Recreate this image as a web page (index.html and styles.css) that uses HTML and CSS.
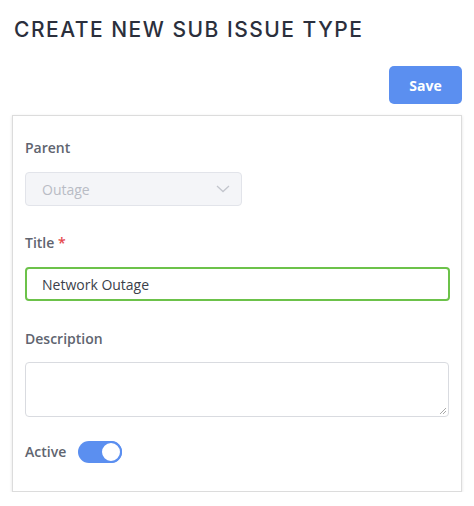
FILE: index.html
```html
<!DOCTYPE html>
<html>
<head>
<meta charset="utf-8">
<link rel="stylesheet" href="styles.css">
</head>
<body>
<div class="page">
  <h1 class="title">CREATE NEW SUB ISSUE TYPE</h1>
  <div class="actions">
    <button class="btn-save">Save</button>
  </div>
  <div class="card">
    <div class="field">
      <label class="label">Parent</label>
      <div class="select">
        <span class="select-value">Outage</span>
        <svg class="chev" width="14" height="8" viewBox="0 0 14 8"><path d="M1 1 L7 6.5 L13 1" fill="none" stroke="#c3c6cd" stroke-width="1.3"/></svg>
      </div>
    </div>
    <div class="field">
      <label class="label">Title <span class="req">*</span></label>
      <div class="input input-valid">Network Outage</div>
    </div>
    <div class="field field-desc">
      <label class="label">Description</label>
      <div class="textarea">
        <svg class="grip" width="8" height="8" viewBox="0 0 8 8"><path d="M7 1 L1 7 M7 4 L4 7" stroke="#a8a8a8" stroke-width="1"/></svg>
      </div>
    </div>
    <div class="active-row">
      <span class="label inline">Active</span>
      <span class="toggle"><span class="knob"></span></span>
    </div>
  </div>
</div>
</body>
</html>
```

FILE: styles.css
```css
* { box-sizing: border-box; }
body {
  margin: 0;
  background: #ffffff;
  font-family: "Open Sans", "Liberation Sans", sans-serif;
}
.page {
  padding: 17px 12px 0 12px;
  width: 474px;
}
.title {
  margin: 0 0 0 2px;
  font-family: "Inter", "Liberation Sans", sans-serif;
  font-weight: 500;
  font-size: 21px;
  line-height: 26px;
  letter-spacing: 1.5px;
  color: #2b2f3c;
}
.actions {
  display: flex;
  justify-content: flex-end;
  margin-top: 23px;
}
.btn-save {
  width: 73px;
  height: 38px;
  border: none;
  border-radius: 5px;
  background: #5b8ff0;
  color: #ffffff;
  font-family: "Open Sans", "Liberation Sans", sans-serif;
  font-weight: 700;
  font-size: 14px;
  padding: 0;
}
.card {
  margin-top: 11px;
  width: 450px;
  border: 1px solid #dcdcdc;
  box-shadow: 0 1px 3px rgba(0,0,0,0.12);
  padding: 22px 11px 28px 12px;
  display: flex;
  flex-direction: column;
  gap: 27px;
}
.field {
  display: flex;
  flex-direction: column;
  gap: 14px;
}
.field-desc {
  margin-top: 1px;
  gap: 13px;
}
.label {
  font-size: 14px;
  line-height: 20px;
  color: #60646f;
  font-weight: 600;
}
.req { color: #e5484d; }
.select {
  width: 217px;
  height: 34px;
  background: #f4f5f8;
  border: 1px solid #e2e4ea;
  border-radius: 4px;
  display: flex;
  align-items: center;
  justify-content: space-between;
  padding: 0 11px 0 16px;
}
.select-value {
  font-size: 14px;
  color: #b9bcc5;
}
.input {
  height: 34px;
  border: 2px solid #6cc24a;
  border-radius: 4px;
  padding: 0 15px;
  display: flex;
  align-items: center;
  font-size: 14px;
  color: #3b3f4a;
}
.textarea {
  height: 55px;
  border: 1px solid #d9dbe0;
  border-radius: 4px;
  position: relative;
  margin-right: 1px;
}
.grip {
  position: absolute;
  right: 1px;
  bottom: 1px;
}
.active-row {
  display: flex;
  align-items: center;
  gap: 12px;
  margin-top: -3px;
}
.toggle {
  width: 44px;
  height: 22px;
  border-radius: 11px;
  background: #5b8ff0;
  position: relative;
  display: inline-block;
}
.knob {
  position: absolute;
  right: 0;
  top: 0;
  width: 22px;
  height: 22px;
  border-radius: 50%;
  background: #ffffff;
  border: 2px solid #5b8ff0;
}
```
